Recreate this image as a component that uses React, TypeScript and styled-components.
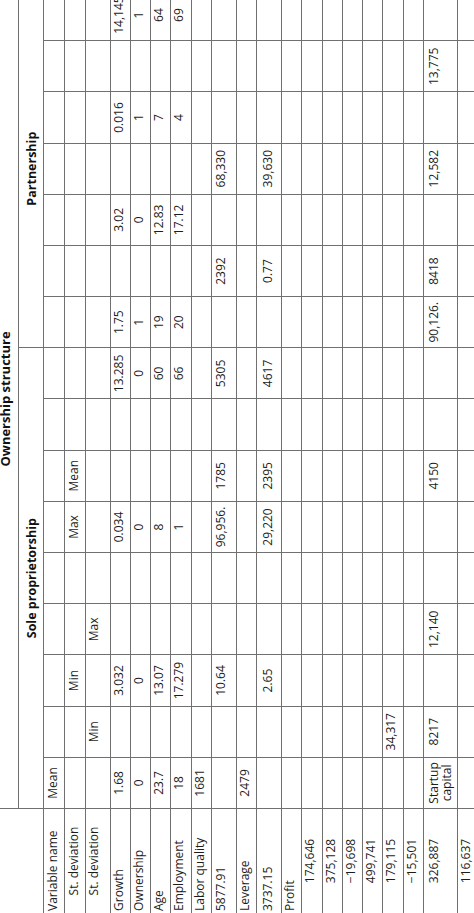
import styled, { createGlobalStyle } from 'styled-components';

const GlobalStyle = createGlobalStyle`
    html, body {
        margin: 0;
        padding: 0;
        background: #ffffff;
    }
    body {
        font-family: "Open Sans", "DejaVu Sans", sans-serif;
    }
`;

const LINE = '#707070';
const NAME_W = 104;
const DATA_W = 50.2;
const DATA_COLS = 16;

const Page = styled.div`
    width: 474px;
    height: 913px;
    overflow: hidden;
    background: #ffffff;
`;

// the table is set out landscape and turned a quarter anticlockwise
const Turned = styled.div`
    display: flow-root;
    width: 913px;
    height: 474px;
    transform-origin: top left;
    transform: translateY(913px) rotate(-90deg);
`;

// grid lines are the 1px gaps showing the sheet's line colour through
const Sheet = styled.div<{ $rows: string }>`
    display: grid;
    grid-template-columns: ${NAME_W}px repeat(${DATA_COLS}, ${DATA_W}px);
    grid-template-rows: ${props => props.$rows};
    gap: 1px;
    width: max-content;
    margin-top: -6px;
    background: ${LINE};
    font-size: 12px;
    line-height: 13px;
    color: #1c1c1c;
`;

const Cell = styled.div<{ $left?: boolean; $pad?: number }>`
    background: #ffffff;
    padding-top: ${props => props.$pad ?? 1}px;
    padding-left: ${props => (props.$left ? 2 : 0)}px;
    text-align: ${props => (props.$left ? 'left' : 'center')};
    white-space: nowrap;
    overflow: hidden;
`;

const WrapCell = styled(Cell)`
    white-space: normal;
`;

const Corner = styled.div`
    grid-row: span 2;
    background: #ffffff;
`;

const Title = styled.div`
    grid-column: span ${DATA_COLS};
    display: flex;
    align-items: flex-end;
    justify-content: center;
    padding-bottom: 6px;
    background: #ffffff;
    font-size: 13px;
    line-height: 14px;
    font-weight: 700;
    color: #111111;
    white-space: nowrap;
`;

const Group = styled.div<{ $span: number }>`
    grid-column: span ${props => props.$span};
    display: flex;
    align-items: center;
    justify-content: center;
    padding-top: 2px;
    background: #ffffff;
    font-size: 12.5px;
    line-height: 14px;
    font-weight: 700;
    color: #111111;
    white-space: nowrap;
    overflow: hidden;
`;

type Line = {
    h: number;
    name: string;
    left?: boolean;
    pad?: number;
    cells?: Record<number, string>;
};

const lines: Line[] = [
    { h: 20, name: 'Variable name', left: true, pad: 2, cells: { 1: 'Mean' } },
    { h: 20, name: 'St. deviation', pad: 2, cells: { 3: 'Min', 6: 'Max', 7: 'Mean' } },
    { h: 24, name: 'St. deviation', cells: { 2: 'Min', 4: 'Max' } },
    {
        h: 19, name: 'Growth', left: true,
        cells: { 1: '1.68', 3: '3.032', 6: '0.034', 9: '13.285', 10: '1.75', 12: '3.02', 14: '0.016', 16: '14,145' },
    },
    {
        h: 19, name: 'Ownership', left: true,
        cells: { 1: '0', 3: '0', 6: '0', 9: '0', 10: '1', 12: '0', 14: '1', 16: '1' },
    },
    {
        h: 19, name: 'Age', left: true,
        cells: { 1: '23.7', 3: '13.07', 6: '8', 9: '60', 10: '19', 12: '12.83', 14: '7', 16: '64' },
    },
    {
        h: 20, name: 'Employment', left: true,
        cells: { 1: '18', 3: '17.279', 6: '1', 9: '66', 10: '20', 12: '17.12', 14: '4', 16: '69' },
    },
    { h: 19, name: 'Labor quality', left: true, cells: { 1: '1681' } },
    {
        h: 24, name: '5877.91', left: true, pad: 2,
        cells: { 3: '10.64', 6: '96,956.', 7: '1785', 9: '5305', 11: '2392', 13: '68,330' },
    },
    { h: 19, name: 'Leverage', left: true, cells: { 1: '2479' } },
    {
        h: 24, name: '3737.15', left: true, pad: 4,
        cells: { 3: '2.65', 6: '29,220', 7: '2395', 9: '4617', 11: '0.77', 13: '39,630' },
    },
    { h: 19, name: 'Profit', left: true },
    { h: 20, name: '174,646' },
    { h: 19, name: '375,128' },
    { h: 19, name: '\u221219,698' },
    { h: 19, name: '499,741' },
    { h: 20, name: '179,115', cells: { 2: '34,317' } },
    { h: 19, name: '\u221215,501' },
    {
        h: 33, name: '326,887', pad: 3,
        cells: {
            1: 'Startup capital', 2: '8217', 4: '12,140', 7: '4150', 10: '90,126.',
            11: '8418', 13: '12,582', 15: '13,775',
        },
    },
    { h: 24, name: '116,637' },
];

const columns = Array.from({ length: DATA_COLS }, (_, i) => i + 1);
const rowTemplate = [24, 24, ...lines.map(l => l.h)].map(h => `${h}px`).join(' ');

const App = () => {
    return (
        <>
            <GlobalStyle />
            <Page>
                <Turned>
                    <Sheet $rows={rowTemplate}>
                        <Corner />
                        <Title>Ownership structure</Title>
                        <Group $span={9}>Sole proprietorship</Group>
                        <Group $span={7}>Partnership</Group>
                        {lines.map((line, i) => [
                            <Cell key={`${i}-name`} $left={line.left} $pad={line.pad}>
                                {line.name}
                            </Cell>,
                            ...columns.map(c => {
                                const value = line.cells?.[c] ?? '';
                                return value.includes(' ') ? (
                                    <WrapCell key={`${i}-${c}`} $pad={line.pad}>{value}</WrapCell>
                                ) : (
                                    <Cell key={`${i}-${c}`} $pad={line.pad}>{value}</Cell>
                                );
                            }),
                        ])}
                    </Sheet>
                </Turned>
            </Page>
        </>
    );
};

export default App;
